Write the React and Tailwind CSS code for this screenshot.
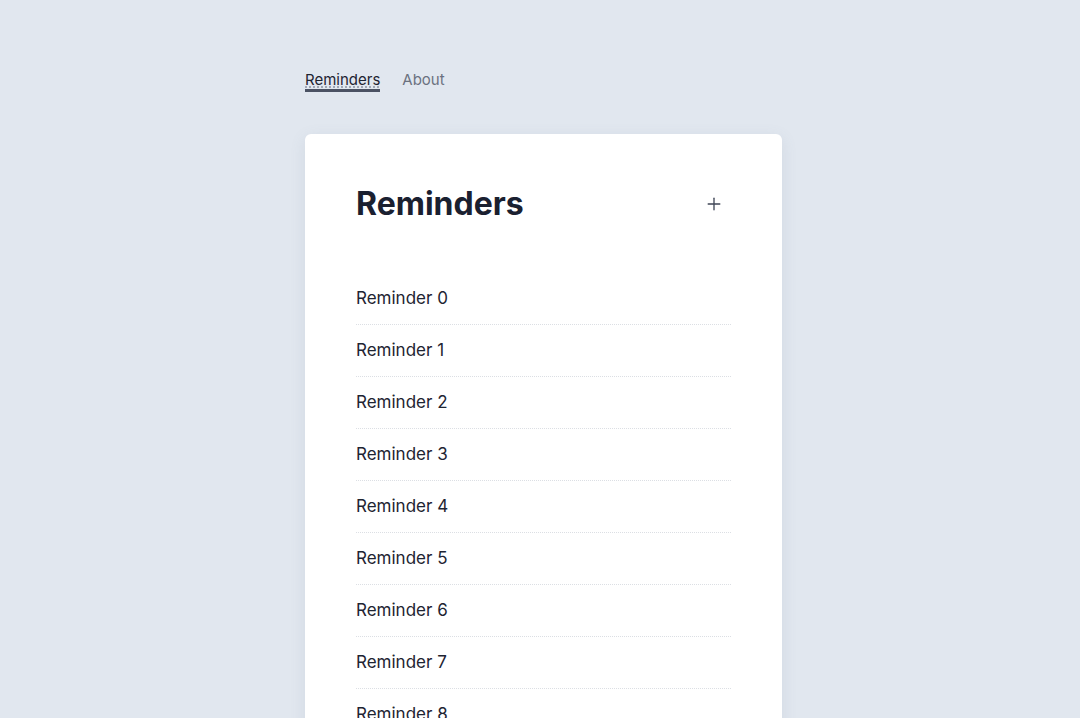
import { Plus } from "lucide-react";

const reminders = [0, 1, 2, 3, 4, 5, 6, 7, 8, 9];

function Nav() {
  return (
    <nav className="flex items-end gap-[22px] text-[15px] leading-[18px]">
      <a className="border-b-[3px] border-[#4b5263] text-[#1e2432] underline decoration-dotted decoration-[#8b93a3] underline-offset-[2px]">
        Reminders
      </a>
      <a className="pb-[3px] text-[#6b7280]">About</a>
    </nav>
  );
}

function ReminderList() {
  return (
    <ul className="mt-[47px]">
      {reminders.map((n) => (
        <li
          key={n}
          className="h-[52px] flex items-center border-b border-dotted border-[#dcdfe4] text-[17px] text-[#1e2432]"
        >
          Reminder {n}
        </li>
      ))}
    </ul>
  );
}

export default function App() {
  return (
    <div
      className="h-[718px] overflow-hidden bg-[#e1e7ef] pl-[305px] pt-[71px]"
      style={{ fontFamily: "Inter, 'Noto Sans', sans-serif" }}
    >
      <Nav />
      <div className="mt-[42px] w-[477px] rounded-md bg-white shadow-[0_4px_16px_rgba(100,116,139,0.12)] px-[51px] pt-[48px] pb-10">
        <div className="flex items-center justify-between">
          <h1 className="text-[32px] leading-[44px] font-bold text-[#1a2030]">
            Reminders
          </h1>
          <button className="mr-[7px] text-[#3f4656]">
            <Plus size={20} strokeWidth={1.6} />
          </button>
        </div>
        <ReminderList />
      </div>
    </div>
  );
}
